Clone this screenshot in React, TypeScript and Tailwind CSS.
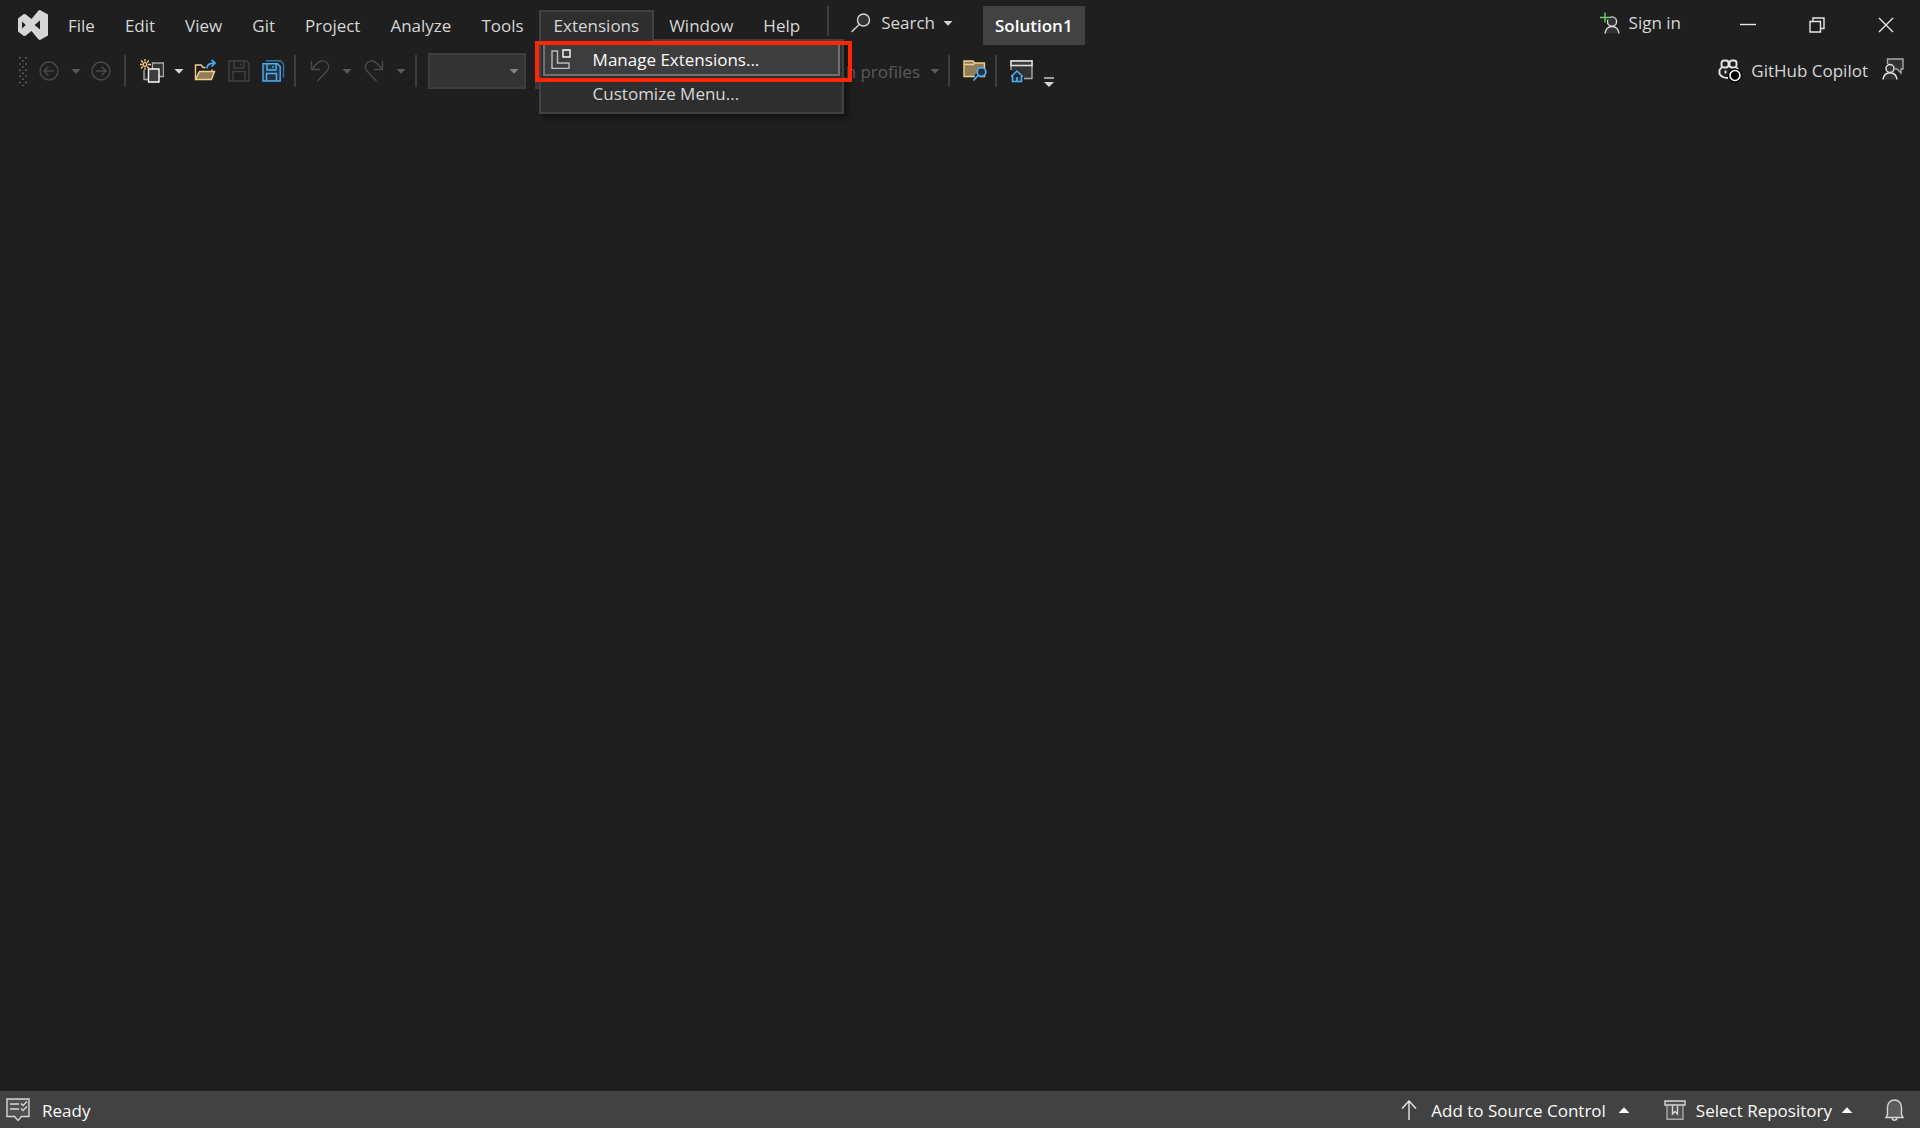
import type { ReactNode } from "react";

const menus = [
  "File",
  "Edit",
  "View",
  "Git",
  "Project",
  "Analyze",
  "Tools",
  "Extensions",
  "Window",
  "Help",
];

const Icon = ({
  w = 24,
  h = 24,
  className = "",
  children,
}: {
  w?: number;
  h?: number;
  className?: string;
  children: ReactNode;
}) => (
  <svg
    width={w}
    height={h}
    viewBox={`0 0 ${w} ${h}`}
    fill="none"
    stroke="currentColor"
    strokeWidth="1.4"
    aria-hidden="true"
    className={`shrink-0 ${className}`}
  >
    {children}
  </svg>
);

const Caret = ({ up = false }: { up?: boolean }) => (
  <svg
    width={up ? 12 : 10}
    height={up ? 6 : 5}
    viewBox="0 0 10 5"
    fill="currentColor"
    aria-hidden="true"
    className={up ? "shrink-0 rotate-180" : "shrink-0"}
  >
    <path d="M0.5 0h9L5 4.8z" />
  </svg>
);

const Separator = () => <div className="h-8 w-0.5 shrink-0 bg-[#3d3d3d]" />;

const ToolButton = ({
  label,
  className = "",
  children,
}: {
  label: string;
  className?: string;
  children: ReactNode;
}) => (
  <button
    aria-label={label}
    className={`flex shrink-0 items-center justify-center ${className}`}
  >
    {children}
  </button>
);

const Logo = () => (
  <svg width="30" height="30" viewBox="0 0 30 30" aria-hidden="true" className="shrink-0">
    <path
      fill="#d6d6d6"
      fillRule="evenodd"
      d="M0 8.5 5.8 4 7.5 4.2 13.5 9 20.5 0.5 22 0 30 4.5V25.5L22 30 20.5 29.5 13.5 21 7.5 25.8 5.8 26 0 21.5ZM4 11.5V18.5L7.8 15ZM22 10.5 16.6 15 22 19.5Z"
    />
  </svg>
);

const ExtensionsMenu = () => (
  <div className="absolute -top-px left-0 z-10 mt-[30px] w-[305px] border-2 border-[#424242] bg-[#2e2e2e] p-0.5 shadow-[4px_4px_6px_rgba(0,0,0,0.4)]">
    <button className="flex h-[33px] w-full items-center border-2 border-[#707070] bg-[#3d3d3d] pl-1.5 text-[#fafafa]">
      <Icon w={20} h={20} className="mr-[22px] text-[#bdbdbd]">
        <path d="M1 2h5.5v12H18v5.5H1z" />
        <path d="M12 1h7v7h-7z" stroke="#fafafa" />
      </Icon>
      <span className="pt-0.5">Manage Extensions...</span>
    </button>
    <button className="flex h-[34px] w-full items-center pt-0.5 pl-[50px] text-[#d6d6d6]">
      Customize Menu...
    </button>
    <div className="pointer-events-none absolute top-0 -left-1.5 h-[41px] w-[317px] border-4 border-[#ff2600]" />
  </div>
);

const TitleBar = () => (
  <header className="flex h-12 items-center pt-0.5 pl-[18px]">
    <Logo />
    <nav className="ml-[5px] flex">
      {menus.map((menu) =>
        menu === "Extensions" ? (
          <div key={menu} className="relative">
            <button className="relative z-20 h-[31px] border-2 border-b-0 border-[#424242] bg-[#2e2e2e] px-[13px]">
              {menu}
            </button>
            <ExtensionsMenu />
          </div>
        ) : (
          <button key={menu} className="h-[31px] px-[15px] pt-0.5">
            {menu}
          </button>
        ),
      )}
    </nav>
    <div className="mb-2 ml-3 h-[30px] w-0.5 bg-[#3d3d3d]" />
    <button className="mb-1 ml-[22px] flex items-center">
      <Icon w={20} h={20} className="mr-2.5">
        <circle cx="12.5" cy="7" r="6" fill="#333333" />
        <path d="M8.2 11.4 0.6 19" />
      </Icon>
      <span className="mr-2">Search</span>
      <Caret />
    </button>
    <div className="ml-[30px] flex h-[39px] items-center bg-[#424242] px-3 pt-0.5 font-semibold text-white">
      Solution1
    </div>
    <button className="mr-8 mb-1 ml-auto flex items-center">
      <Icon w={20} h={22} className="mr-[9px]">
        <circle cx="12" cy="9.5" r="4.6" fill="#333333" />
        <path d="M5 21.5c.6-4.6 3.4-7 7-7s6.4 2.4 7 7" fill="#333333" />
        <path d="M0 5.5h10M5 .5v10" stroke="#1f1f1f" strokeWidth="4" />
        <path d="M0 5.5h10M5 .5v10" stroke="#6fcf6f" />
      </Icon>
      Sign in
    </button>
    <div className="flex text-[#e6e6e6]">
      <ToolButton label="Minimize" className="h-8 w-[69px]">
        <Icon w={16} h={16}>
          <path d="M0 7.5h16" />
        </Icon>
      </ToolButton>
      <ToolButton label="Restore" className="h-8 w-[69px]">
        <Icon w={16} h={16}>
          <path d="M1 4.5h10.5V15H1zM4 4.5V1h11v10.5h-3.5" />
        </Icon>
      </ToolButton>
      <ToolButton label="Close" className="h-8 w-[69px]">
        <Icon w={16} h={16}>
          <path d="M1 1l14 14M15 1 1 15" />
        </Icon>
      </ToolButton>
    </div>
  </header>
);

const Toolbar = () => (
  <div className="flex h-[46px] items-center pl-[19px]">
    <Icon w={8} h={30} className="mr-3 text-[#5a5a5a]">
      <path d="M1 1v29M7 1v29" strokeWidth="2" strokeDasharray="1.5 4.7" />
      <path d="M4 4v26" strokeWidth="2" strokeDasharray="1.5 4.7" />
    </Icon>
    <ToolButton label="Navigate backward" className="mr-3 text-[#4a4a4a]">
      <Icon w={20} h={20}>
        <circle cx="10" cy="10" r="9" />
        <path d="M15 10H5.5M9.500 5.500 5 10l4.500 4.500" />
      </Icon>
    </ToolButton>
    <ToolButton label="Navigation history" className="mr-2.5 text-[#5a5a5a]">
      <Caret />
    </ToolButton>
    <ToolButton label="Navigate forward" className="mr-[13px] text-[#4a4a4a]">
      <Icon w={20} h={20}>
        <circle cx="10" cy="10" r="9" />
        <path d="M5 10h9.500M10.500 5.500 15 10l-4.500 4.500" />
      </Icon>
    </ToolButton>
    <Separator />
    <ToolButton label="New project" className="mr-2.5 ml-3.5">
      <Icon>
        <path d="M4 11v9.500h5" fill="#333333" stroke="#a8a8a8" />
        <path d="M12.500 4h11v13.500h-11z" fill="#333333" stroke="#a8a8a8" />
        <path d="M8.500 10h10.500v13H8.500z" fill="#3d3d3d" stroke="#fafafa" />
        <circle cx="5" cy="5.500" r="4.500" fill="#1f1f1f" stroke="none" />
        <g stroke="#f2cf88" strokeWidth="1.300">
          <circle cx="5" cy="5.500" r="1.800" />
          <path d="M5 0v2.500M5 8.500V11M-.5 5.500h3M8 5.500h3M1 1.500 3 3.500M7 7.500l2 2M9 1.500 7 3.500M3 7.500l-2 2" />
        </g>
      </Icon>
    </ToolButton>
    <ToolButton label="New project options" className="mr-2.5">
      <Caret />
    </ToolButton>
    <ToolButton label="Open" className="mr-3">
      <Icon w={22} h={24}>
        <path d="M1.500 20V6H7l2 2.500h2.500M18 10.500V13" stroke="#f2cf88" />
        <path d="M5.500 12.500H20.500L17.500 20.500H1.500z" fill="#8f7c58" stroke="#f2cf88" />
        <path
          d="M13 9.500c0-4 2.500-5.500 8-5.500M17.500.8 21 4l-3.500 3.500"
          stroke="#4fb0f5"
          strokeWidth="1.600"
        />
      </Icon>
    </ToolButton>
    <ToolButton label="Save" className="mr-3 text-[#424242]">
      <Icon w={22} h={24}>
        <path d="M1 2h17.500L21 4.500V22H1z" />
        <path d="M6 2v7h10V2M5 22v-9.500h12V22M13 4.500V7" />
      </Icon>
    </ToolButton>
    <ToolButton label="Save all" className="mr-2.5 text-[#4fb0f5]">
      <Icon w={22} h={24} className="overflow-visible">
        <path d="M4 1.800h14.500l3 3V18.500" stroke="#2d78ad" />
        <path d="M1 4.800h14.500l2.700 2.700V22H1z" fill="#243440" />
        <path d="M5 5v6h9V5M4.500 22v-7.500h10V22M11 7v2" />
      </Icon>
    </ToolButton>
    <Separator />
    <ToolButton label="Undo" className="mr-3 ml-3.5 text-[#4a4a4a]">
      <Icon w={20} h={24}>
        <path d="M1.500 2v8.500H10M1.500 10.500 7 4.500C10 1.200 14 1.300 16.500 3.500c2.800 2.500 2.800 6 .3 8.700L7.500 22" />
      </Icon>
    </ToolButton>
    <ToolButton label="Undo history" className="mr-3 text-[#5a5a5a]">
      <Caret />
    </ToolButton>
    <ToolButton label="Redo" className="mr-3 text-[#4a4a4a]">
      <Icon w={20} h={24}>
        <path d="M18.500 2v8.500H10M18.500 10.500 13 4.500C10 1.200 6 1.300 3.500 3.500.7 6 .7 9.500 3.200 12.200L12.500 22" />
      </Icon>
    </ToolButton>
    <ToolButton label="Redo history" className="mr-[9px] text-[#5a5a5a]">
      <Caret />
    </ToolButton>
    <Separator />
    <label className="relative ml-[11px] flex items-center text-[#858585]">
      <select
        aria-label="Solution configuration"
        className="h-9 w-[98px] appearance-none border-2 border-[#3d3d3d] bg-[#333333]"
      />
      <span className="pointer-events-none absolute right-[7px]">
        <Caret />
      </span>
    </label>
    <select
      aria-label="Solution platform"
      className="ml-[9px] h-9 w-[98px] appearance-none border-2 border-[#3d3d3d] bg-[#333333]"
    />
    <button className="flex w-[307px] items-center justify-end text-[#5a5a5a]">
      <span className="mr-2.5 pt-0.5">Launch profiles</span>
      <Caret />
    </button>
    <div className="ml-2">
      <Separator />
    </div>
    <ToolButton label="Find in files" className="mr-2 ml-[13px]">
      <Icon>
        <path d="M1 2h9l1.500 2H21.500v13.500H1z" fill="#8f7c58" stroke="#f2cf88" />
        <path d="M1 5.500h9.500L12 4" stroke="#f2cf88" />
        <path d="M13 18.500 21 9.500" stroke="#1f1f1f" strokeWidth="5" />
        <circle cx="18.500" cy="13" r="4.300" fill="#26323b" stroke="#4fb0f5" strokeWidth="1.700" />
        <path d="M15.500 16 10.500 21.500" stroke="#4fb0f5" strokeWidth="1.700" />
      </Icon>
    </ToolButton>
    <Separator />
    <ToolButton label="Start window" className="mr-2.5 ml-[13px]">
      <Icon>
        <path d="M1 11V2h21v17.500h-8.500" fill="#333333" stroke="#a8a8a8" />
        <path d="M1 6.500V2h21v4.500z" fill="#3d3d3d" stroke="#e6e6e6" />
        <path d="M7 10 0 16v7h14v-7z" fill="#1f1f1f" stroke="none" />
        <path
          d="M1 17.500 7 12l6 5.500M2.500 16.500v6h9v-6M7 22.500V18"
          fill="#26323b"
          stroke="#4fb0f5"
          strokeWidth="1.600"
        />
      </Icon>
    </ToolButton>
    <ToolButton label="Toolbar options" className="self-end pb-[7px]">
      <Icon w={10} h={10}>
        <path d="M0 1h10" />
        <path d="M0 5h10L5 10z" fill="currentColor" stroke="none" />
      </Icon>
    </ToolButton>
    <button className="ml-auto flex items-center">
      <Icon className="mr-[9px]">
        <g stroke="#e6e6e6" strokeWidth="1.900">
          <rect x="3.500" y="1.500" width="7" height="7" rx="2.500" />
          <rect x="11.500" y="1.500" width="7" height="7" rx="2.500" />
          <path d="M3.500 8.500 1.500 11v4c2 2.800 5 4 8.500 4M18.500 8.500l1.500 2M7.500 11.500v3" />
        </g>
        <circle cx="17" cy="16.500" r="7" fill="#000000" stroke="none" />
        <circle cx="17" cy="16.500" r="5" fill="#000000" stroke="#fafafa" strokeWidth="1.600" />
      </Icon>
      GitHub Copilot
    </button>
    <ToolButton label="Send feedback" className="mr-4 mb-1 ml-3.5">
      <Icon w={22} h={24}>
        <path d="M5.500 7V2H21v10h-2v4l-4-4h-2" fill="#333333" stroke="#a8a8a8" />
        <circle cx="8" cy="11.500" r="4" fill="#333333" stroke="#e6e6e6" />
        <path
          d="M1 22.500c.6-4.500 3.300-6.700 7-6.700s6.400 2.200 7 6.700"
          fill="#333333"
          stroke="#e6e6e6"
        />
      </Icon>
    </ToolButton>
  </div>
);

const StatusBar = () => (
  <footer className="flex h-[37px] items-center bg-[#424242] pr-4 pl-1.5 text-[#fafafa]">
    <Icon className="mr-3 text-[#d6d6d6]">
      <path d="M1 1h22v17.500h-7.500L12 22.500 8.500 18.500H1z" fill="#505050" />
      <path d="M4 6h9M4 11h9M15 5.500l2 2L21 3.500M15 10.500l2 2 4-4" />
    </Icon>
    <span className="pt-0.5">Ready</span>
    <button className="ml-auto flex items-center">
      <Icon w={16} h={20} className="mr-3.5 text-[#e6e6e6]">
        <path d="M8 20V1M1 8.500 8 1l7 7.500" />
      </Icon>
      <span className="mr-3 pt-0.5">Add to Source Control</span>
      <Caret up />
    </button>
    <button className="ml-[34px] flex items-center">
      <Icon w={22} h={20} className="mr-2.5 text-[#d6d6d6]">
        <path d="M3 5.500v13.800h16V5.500" fill="#505050" stroke="#a8a8a8" />
        <path d="M1 1h20v4H1z" fill="#505050" />
        <path d="M8.500 5.500v8.500L11 11.500l2.500 2.500V5.500" />
      </Icon>
      <span className="mr-[9px] pt-0.5">Select Repository</span>
      <Caret up />
    </button>
    <ToolButton label="Notifications" className="ml-8 text-[#d6d6d6]">
      <Icon w={19} h={22}>
        <path
          d="M2.500 15.500V8.500c0-4.500 3-7.500 7-7.500s7 3 7 7.500v7l1.500 3H1z"
          fill="#5c5c5c"
        />
        <path d="M7 19c.3 1.600 1.200 2.200 2.500 2.200S11.700 20.600 12 19" />
      </Icon>
    </ToolButton>
  </footer>
);

export default function App() {
  return (
    <div className="flex min-h-screen flex-col bg-[#1f1f1f] font-['Open_Sans','Noto_Sans',sans-serif] text-[17px] leading-6 whitespace-nowrap text-[#d6d6d6]">
      <TitleBar />
      <Toolbar />
      <main className="flex-1" />
      <StatusBar />
    </div>
  );
}
